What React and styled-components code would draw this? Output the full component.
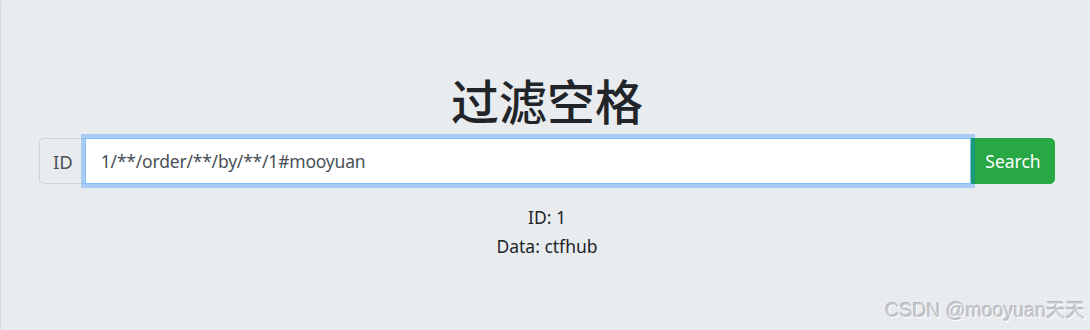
import { useEffect, useRef } from "react";
import styled, { createGlobalStyle } from "styled-components";

const GlobalStyle = createGlobalStyle`
    html, body {
        margin: 0;
        padding: 0;
        background: #e9ecef;
    }
    * {
        box-sizing: border-box;
    }
`;

const S = {
    Jumbotron: styled.div`
        position: relative;
        height: 330px;
        background: #e9ecef;
        border-left: 1px solid #d6dadf;
        border-top-left-radius: 4px;
        padding: 71px 35px 0 38px;
        font-family: "Noto Sans", "Noto Sans CJK SC", sans-serif;
        color: #212529;
    `,
    Title: styled.h1`
        margin: 0 0 9.6px;
        font-family: "Noto Sans CJK SC", sans-serif;
        font-size: 48px;
        font-weight: 500;
        line-height: 57.6px;
        text-align: center;
    `,
    InputGroup: styled.form`
        display: flex;
        align-items: stretch;
        height: 46px;
    `,
    Addon: styled.span`
        display: flex;
        align-items: center;
        padding: 0 12px 0 13px;
        background: #e9ecef;
        border: 1px solid #ced4da;
        border-right: none;
        border-radius: 5px 0 0 5px;
        color: #495057;
        font-size: 18.5px;
    `,
    Input: styled.input`
        position: relative;
        z-index: 2;
        flex: 1;
        min-width: 0;
        margin: 0;
        padding: 0 14px 0 15px;
        background: #fff;
        border: 1px solid #80bdff;
        border-radius: 0;
        box-shadow: 0 0 0 4px rgba(0, 123, 255, 0.28);
        outline: none;
        color: #495057;
        caret-color: #212529;
        font-family: "Noto Sans", sans-serif;
        font-size: 17.5px;
        letter-spacing: -0.2px;
    `,
    Button: styled.button`
        width: 84px;
        margin: 0;
        padding: 0;
        background: #28a745;
        border: 1px solid #28a745;
        border-radius: 0 5px 5px 0;
        color: #fff;
        font-family: "Noto Sans", sans-serif;
        font-size: 17.5px;
        cursor: pointer;
    `,
    Result: styled.div`
        margin-top: 19px;
        text-align: center;
        font-size: 17.5px;
        line-height: 28.5px;
    `,
    Watermark: styled.div`
        position: absolute;
        right: 5px;
        bottom: 7px;
        font-family: "Liberation Sans", "Noto Sans CJK SC", sans-serif;
        font-size: 19.5px;
        color: #c6c9cd;
        text-shadow: 1px 1px 0 #ffffff, -1px -1px 0 #b4b8bc;
    `,
};

function App() {
    const inputRef = useRef(null);

    useEffect(() => {
        const el = inputRef.current;
        if (el) {
            el.focus();
            el.setSelectionRange(el.value.length, el.value.length);
        }
    }, []);

    return (
        <>
            <GlobalStyle />
            <S.Jumbotron>
                <S.Title>过滤空格</S.Title>
                <S.InputGroup onSubmit={(e) => e.preventDefault()}>
                    <S.Addon>ID</S.Addon>
                    <S.Input ref={inputRef} name="id" defaultValue="1/**/order/**/by/**/1#mooyuan" />
                    <S.Button type="submit">Search</S.Button>
                </S.InputGroup>
                <S.Result>
                    <div>ID: 1</div>
                    <div>Data: ctfhub</div>
                </S.Result>
                <S.Watermark>CSDN @mooyuan天天</S.Watermark>
            </S.Jumbotron>
        </>
    );
}

export default App;
